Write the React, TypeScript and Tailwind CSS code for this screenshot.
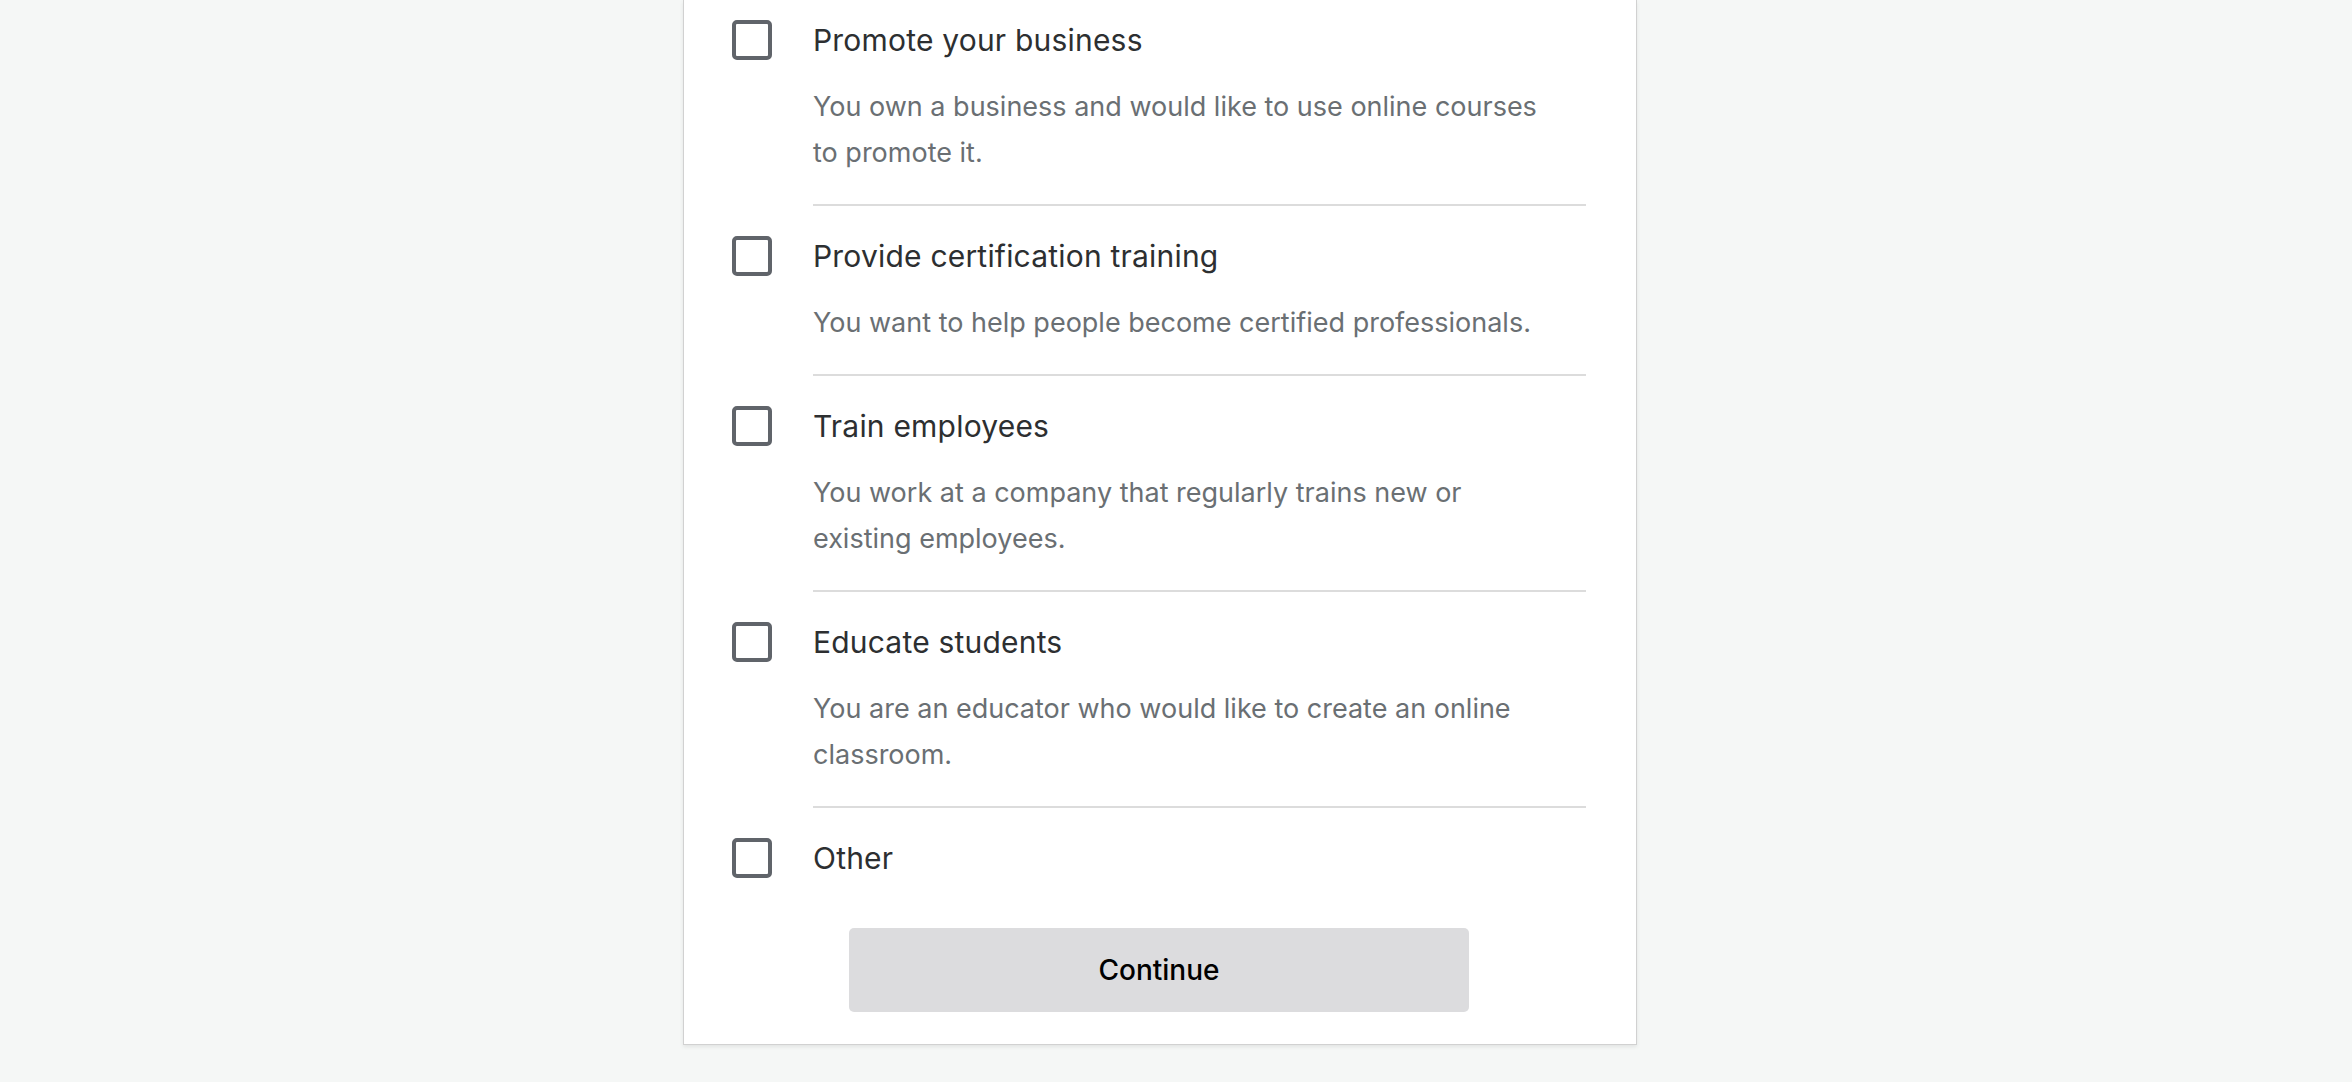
import React from "react";

type Goal = {
  title: string;
  description?: string;
};

const goals: Goal[] = [
  {
    title: "Promote your business",
    description:
      "You own a business and would like to use online courses to promote it.",
  },
  {
    title: "Provide certification training",
    description: "You want to help people become certified professionals.",
  },
  {
    title: "Train employees",
    description:
      "You work at a company that regularly trains new or existing employees.",
  },
  {
    title: "Educate students",
    description:
      "You are an educator who would like to create an online classroom.",
  },
  { title: "Other" },
];

function GoalRow({ goal, last }: { goal: Goal; last: boolean }) {
  return (
    <label className="flex cursor-pointer gap-[41px]">
      <span className="h-[40px] w-[40px] shrink-0 rounded-[5px] border-[4px] border-[#60646a] bg-white" />
      <div
        className={
          "flex-1 " + (last ? "" : "border-b-2 border-[#dcdcdc] pb-[28px] mb-[30px]")
        }
      >
        <div className="text-[30px] leading-[40px] tracking-[0.2px] text-[#2d2f31]">
          {goal.title}
        </div>
        {goal.description && (
          <p className="mt-[24px] pr-[20px] text-[27px] leading-[46px] text-[#6a6f73]">
            {goal.description}
          </p>
        )}
      </div>
    </label>
  );
}

export default function App() {
  return (
    <div
      className="min-h-screen w-full bg-[#f5f7f6] pr-[32px]"
      style={{ fontFamily: "Inter, 'Noto Sans', sans-serif" }}
    >
      <div className="mx-auto w-[954px] border-x border-b border-[#d1d1d1] bg-white pl-[48px] pr-[50px] pt-[20px] pb-[32px] shadow-[0_2px_4px_rgba(0,0,0,0.08)]">
        <div className="flex flex-col">
          {goals.map((g, i) => (
            <GoalRow key={g.title} goal={g} last={i === goals.length - 1} />
          ))}
        </div>
        <div className="mt-[50px] flex justify-center">
          <button
            type="button"
            className="h-[84px] w-[620px] rounded-[5px] bg-[#dcdcde] text-[28px] font-medium text-black"
          >
            Continue
          </button>
        </div>
      </div>
    </div>
  );
}
